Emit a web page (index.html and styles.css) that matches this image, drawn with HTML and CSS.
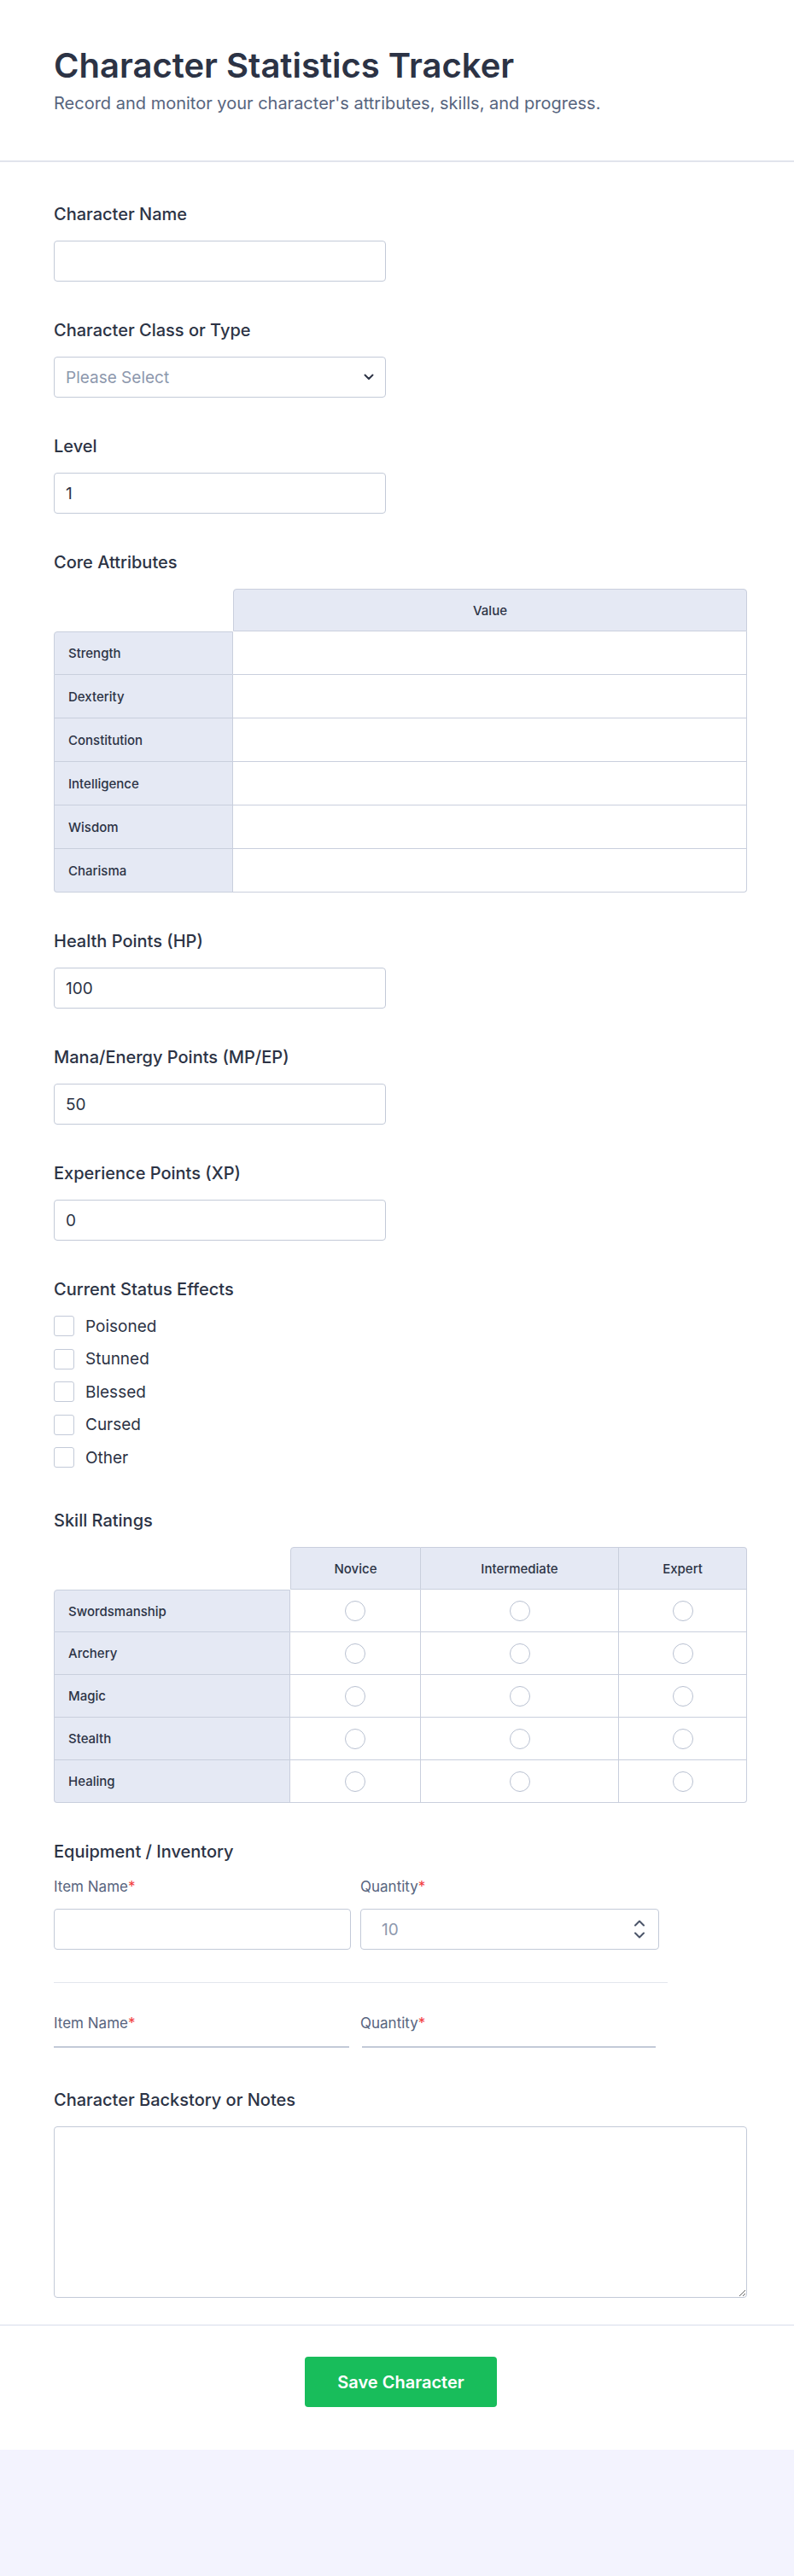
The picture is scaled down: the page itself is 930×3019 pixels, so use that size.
FILE: index.html
```html
<!DOCTYPE html>
<html lang="en">
<head>
  <meta charset="UTF-8">
  <meta name="viewport" content="width=device-width, initial-scale=1.0">
  <title>Character Statistics Tracker</title>
  <link rel="stylesheet" href="styles.css">
</head>
<body>
  <form class="form">
    <!-- Header -->
    <header class="form-header">
      <h1>Character Statistics Tracker</h1>
      <p>Record and monitor your character's attributes, skills, and progress.</p>
    </header>

    <div class="form-body">
      <div class="field">
        <label class="label" for="charName">Character Name</label>
        <input class="input" type="text" id="charName">
      </div>

      <div class="field">
        <label class="label" for="charClass">Character Class or Type</label>
        <div class="select-wrap">
          <select class="input select" id="charClass">
            <option>Please Select</option>
            <option>Warrior</option>
            <option>Mage</option>
            <option>Rogue</option>
          </select>
          <svg class="chevron" width="12" height="8" viewBox="0 0 12 8"><path d="M1.5 1.5 6 6l4.5-4.5" fill="none" stroke="#2c3345" stroke-width="2" stroke-linecap="round" stroke-linejoin="round"/></svg>
        </div>
      </div>

      <div class="field">
        <label class="label" for="level">Level</label>
        <input class="input" type="text" id="level" value="1">
      </div>

      <!-- Core attributes -->
      <div class="field">
        <span class="label">Core Attributes</span>
        <table class="matrix core">
          <colgroup><col class="c-label"><col></colgroup>
          <thead>
            <tr><th class="corner"></th><th>Value</th></tr>
          </thead>
          <tbody>
            <tr><th>Strength</th><td></td></tr>
            <tr><th>Dexterity</th><td></td></tr>
            <tr><th>Constitution</th><td></td></tr>
            <tr><th>Intelligence</th><td></td></tr>
            <tr><th>Wisdom</th><td></td></tr>
            <tr><th>Charisma</th><td></td></tr>
          </tbody>
        </table>
      </div>

      <div class="field">
        <label class="label" for="hp">Health Points (HP)</label>
        <input class="input" type="text" id="hp" value="100">
      </div>

      <div class="field">
        <label class="label" for="mp">Mana/Energy Points (MP/EP)</label>
        <input class="input" type="text" id="mp" value="50">
      </div>

      <div class="field">
        <label class="label" for="xp">Experience Points (XP)</label>
        <input class="input" type="text" id="xp" value="0">
      </div>

      <!-- Status effects -->
      <div class="field">
        <span class="label">Current Status Effects</span>
        <div class="options">
          <label class="option"><input type="checkbox" class="check"> Poisoned</label>
          <label class="option"><input type="checkbox" class="check"> Stunned</label>
          <label class="option"><input type="checkbox" class="check"> Blessed</label>
          <label class="option"><input type="checkbox" class="check"> Cursed</label>
          <label class="option"><input type="checkbox" class="check"> Other</label>
        </div>
      </div>

      <!-- Skill ratings -->
      <div class="field">
        <span class="label">Skill Ratings</span>
        <table class="matrix skills">
          <colgroup><col class="s-label"><col class="s-novice"><col class="s-mid"><col></colgroup>
          <thead>
            <tr><th class="corner"></th><th>Novice</th><th>Intermediate</th><th>Expert</th></tr>
          </thead>
          <tbody>
            <tr><th>Swordsmanship</th><td><input type="radio" name="sword" class="radio"></td><td><input type="radio" name="sword" class="radio"></td><td><input type="radio" name="sword" class="radio"></td></tr>
            <tr><th>Archery</th><td><input type="radio" name="arch" class="radio"></td><td><input type="radio" name="arch" class="radio"></td><td><input type="radio" name="arch" class="radio"></td></tr>
            <tr><th>Magic</th><td><input type="radio" name="magic" class="radio"></td><td><input type="radio" name="magic" class="radio"></td><td><input type="radio" name="magic" class="radio"></td></tr>
            <tr><th>Stealth</th><td><input type="radio" name="stealth" class="radio"></td><td><input type="radio" name="stealth" class="radio"></td><td><input type="radio" name="stealth" class="radio"></td></tr>
            <tr><th>Healing</th><td><input type="radio" name="heal" class="radio"></td><td><input type="radio" name="heal" class="radio"></td><td><input type="radio" name="heal" class="radio"></td></tr>
          </tbody>
        </table>
      </div>

      <!-- Inventory -->
      <div class="field inventory">
        <span class="label">Equipment / Inventory</span>
        <div class="item-row">
          <div>
            <span class="sublabel">Item Name<em>*</em></span>
            <input class="input" type="text">
          </div>
          <div>
            <span class="sublabel">Quantity<em>*</em></span>
            <div class="number-wrap">
              <input class="input number" type="number" placeholder="10">
              <svg class="spinner" width="14" height="24" viewBox="0 0 14 24"><path d="M2 7.5 7 2.5l5 5M2 16.5l5 5 5-5" fill="none" stroke="#4a5468" stroke-width="2" stroke-linecap="round" stroke-linejoin="round"/></svg>
            </div>
          </div>
        </div>
        <div class="item-divider"></div>
        <div class="item-row collapsed">
          <div>
            <span class="sublabel">Item Name<em>*</em></span>
            <div class="stub"></div>
          </div>
          <div>
            <span class="sublabel">Quantity<em>*</em></span>
            <div class="stub"></div>
          </div>
        </div>
      </div>

      <div class="field notes">
        <label class="label" for="notes">Character Backstory or Notes</label>
        <textarea class="input textarea" id="notes"></textarea>
      </div>
    </div>

    <footer class="form-footer">
      <button type="button" class="submit">Save Character</button>
    </footer>
  </form>
</body>
</html>
```

FILE: styles.css
```css
html {
  background-color: #f3f3fe;
}
body {
  margin: 0;
  font-family: Inter, "Noto Sans", sans-serif;
  color: #2c3345;
}
.form {
  background-color: #fff;
}

/* header */
.form-header {
  padding: 53px 63px 52px;
  border-bottom: 2px solid #e1e4ec;
}
.form-header h1 {
  margin: 0;
  font-size: 40px;
  line-height: 48px;
  font-weight: 600;
  color: #2c3345;
}
.form-header p {
  margin: 5px 0 0;
  font-size: 20px;
  line-height: 30px;
  color: #57647e;
}

/* fields */
.form-body {
  display: flex;
  flex-direction: column;
  gap: 42px;
  padding: 46px 63px 31px;
}
.label {
  display: block;
  margin-bottom: 16px;
  font-size: 20px;
  line-height: 30px;
  font-weight: 500;
  color: #2c3345;
}
.input {
  display: block;
  box-sizing: border-box;
  width: 389px;
  height: 48px;
  margin: 0;
  padding: 0 13px;
  border: 1px solid #c3cad8;
  border-radius: 4px;
  background-color: #fff;
  font-family: inherit;
  font-size: 19px;
  color: #2c3345;
}
.input::placeholder {
  color: #8d98ad;
}
.select-wrap,
.number-wrap {
  position: relative;
  width: 389px;
}
.select {
  appearance: none;
  color: #8d98ad;
}
.chevron {
  position: absolute;
  right: 14px;
  top: 20px;
  pointer-events: none;
}

/* matrix tables */
.matrix {
  width: 812px;
  border-collapse: separate;
  border-spacing: 0;
  table-layout: fixed;
  font-size: 15px;
  color: #2c3345;
}
.matrix th,
.matrix td {
  padding: 0 16px;
  border-right: 1px solid #c9cfdd;
  border-bottom: 1px solid #c9cfdd;
  font-weight: 500;
}
.matrix thead tr {
  height: 50px;
}
.matrix thead th {
  background-color: #e5e9f4;
  border-top: 1px solid #c9cfdd;
  text-align: center;
}
.matrix thead th:nth-child(2) {
  border-left: 1px solid #c9cfdd;
  border-top-left-radius: 4px;
}
.matrix thead th:last-child {
  border-top-right-radius: 4px;
}
.matrix thead th.corner {
  background: none;
  border: none;
}
.matrix tbody th {
  background-color: #e5e9f4;
  border-left: 1px solid #c9cfdd;
  text-align: left;
}
.matrix tbody tr:first-child th {
  border-top: 1px solid #c9cfdd;
  border-top-left-radius: 4px;
}
.matrix tbody tr:last-child th {
  border-bottom-left-radius: 4px;
}
.matrix tbody tr:last-child td:last-child {
  border-bottom-right-radius: 4px;
}
.matrix td {
  text-align: center;
}
.core tbody tr {
  height: 51px;
}
.skills tbody tr {
  height: 50px;
}
.c-label {
  width: 210px;
}
.s-label {
  width: 277px;
}
.s-novice {
  width: 153px;
}
.s-mid {
  width: 232px;
}
.radio {
  appearance: none;
  display: block;
  width: 24px;
  height: 24px;
  margin: 0 auto;
  border: 1px solid #b9c1d1;
  border-radius: 50%;
  background-color: #fff;
}

/* checkboxes */
.options {
  display: flex;
  flex-direction: column;
  gap: 14.5px;
  padding-bottom: 5px;
}
.option {
  display: flex;
  align-items: center;
  gap: 13px;
  height: 24px;
  font-size: 19px;
}
.check {
  appearance: none;
  width: 24px;
  height: 24px;
  margin: 0;
  border: 1px solid #c3cad8;
  border-radius: 3px;
  background-color: #fff;
}

/* inventory */
.inventory .label {
  margin-bottom: 13px;
}
.item-row {
  display: grid;
  grid-template-columns: 348px 350px;
  column-gap: 11px;
}
.sublabel {
  display: block;
  margin-bottom: 12px;
  font-size: 17px;
  line-height: 27px;
  color: #57647e;
}
.sublabel em {
  font-style: normal;
  color: #f23a3c;
}
.item-row .input {
  width: 100%;
}
.number-wrap {
  width: 100%;
}
.number {
  padding-left: 24px;
  appearance: textfield;
}
.number::-webkit-inner-spin-button,
.number::-webkit-outer-spin-button {
  -webkit-appearance: none;
  margin: 0;
}
.spinner {
  position: absolute;
  right: 16px;
  top: 12px;
  pointer-events: none;
}
.item-divider {
  width: 719px;
  height: 1px;
  margin: 38px 0 34px;
  background-color: #e3e6ee;
}
.collapsed .sublabel {
  margin-bottom: 13px;
}
.stub {
  height: 2px;
  margin-right: 2px;
  background-color: #c3cad8;
}
.collapsed > div + div .stub {
  margin-left: 2px;
  margin-right: 4px;
}
.notes {
  margin-top: 4px;
}
.textarea {
  width: 812px;
  height: 201px;
  padding: 12px 13px;
  resize: both;
}

/* footer */
.form-footer {
  padding: 36px 0 50px 9px;
  border-top: 2px solid #e9ecf4;
  text-align: center;
}
.submit {
  height: 59px;
  padding: 0 38px;
  border: none;
  border-radius: 4px;
  background-color: #18bd5b;
  color: #fff;
  font-family: inherit;
  font-size: 20px;
  font-weight: 600;
  cursor: pointer;
}
```
